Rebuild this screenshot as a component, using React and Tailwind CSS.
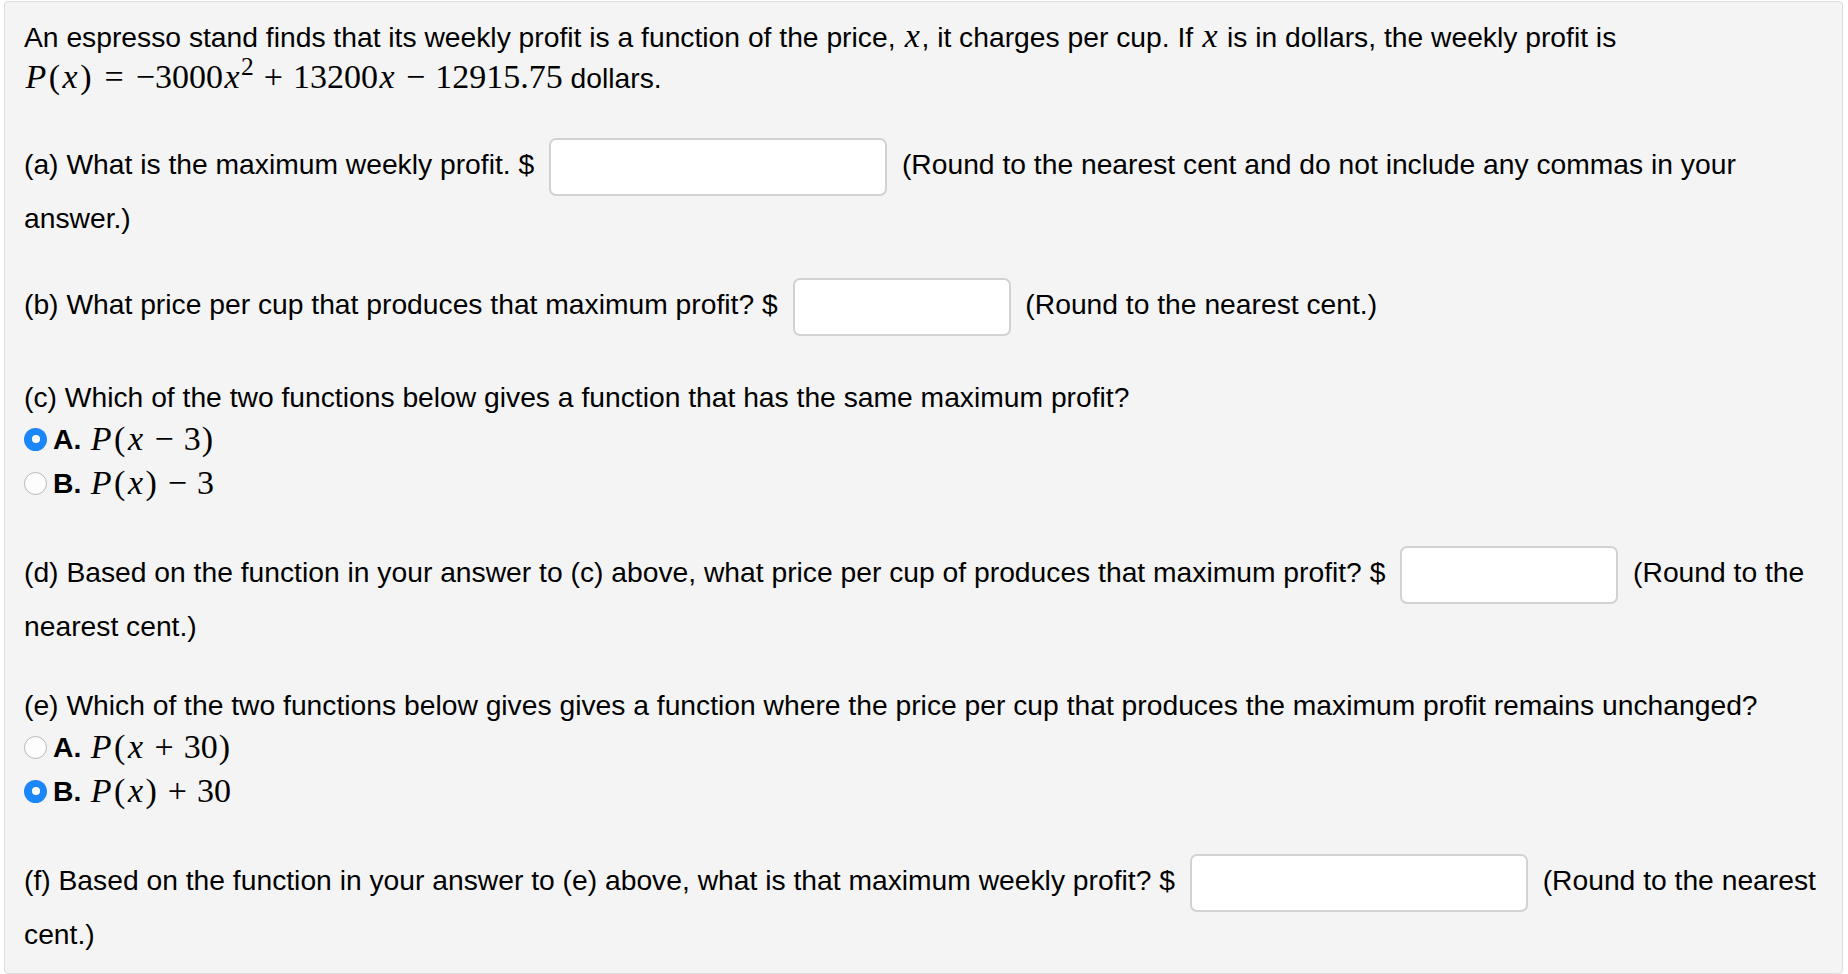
import React from 'react';

// math pieces, set in a serif face like the rendered TeX
const Math = ({ children }) => (
    <span className="font-['Liberation_Serif','DejaVu_Serif',serif] text-[34px] whitespace-nowrap">{children}</span>
);
const V = ({ children }) => <i className="italic px-[1.5px]">{children}</i>;
const Bin = ({ children }) => <span className="mx-[10px]">{children}</span>;
const Rel = ({ children }) => <span className="mx-[12px]">{children}</span>;
const Paren = ({ children }) => <span className="px-[1px]">{children}</span>;

const Answer = ({ w }) => (
    <input
        type="text"
        className={`inline-block align-middle h-[58px] my-[2px] mx-[7px] rounded-[7px] border-2 border-[#d2d2d2] bg-white ${w}`}
    />
);

const Radio = ({ checked }) =>
    checked ? (
        <span className="w-[23px] h-[23px] rounded-full bg-[#1b86f8] flex items-center justify-center shrink-0">
            <span className="w-[8px] h-[8px] rounded-full bg-white" />
        </span>
    ) : (
        <span className="w-[23px] h-[23px] rounded-full border border-[#b9b9b9] bg-[#fdfdfd] shrink-0" />
    );

const Option = ({ letter, checked, children }) => (
    <div className="flex items-center h-[44px]">
        <Radio checked={checked} />
        <span className="ml-[6px] font-bold">{letter}.</span>
        <span className="ml-[8px]">{children}</span>
    </div>
);

export default function App() {
    return (
        <div className="bg-white min-h-screen pt-[1px] pl-[4px] pr-[5px]">
            <div className="rounded-[4px] border border-[#dddddd] bg-[#f4f4f4] pl-[19px] pr-[18px] pt-[14px] pb-[19px] text-black text-[28.25px] leading-[40px] font-['Liberation_Sans',Arial,sans-serif]">
                {/* intro */}
                <div>
                    An espresso stand finds that its weekly profit is a function of the price,{' '}
                    <Math><V>x</V></Math>, it charges per cup. If <Math><V>x</V></Math> is in dollars, the weekly profit is{' '}
                    <Math>
                        <V>P</V><Paren>(</Paren><V>x</V><Paren>)</Paren><Rel>=</Rel>−3000<V>x</V><sup>2</sup>
                        <Bin>+</Bin>13200<V>x</V><Bin>−</Bin>12915.75
                    </Math>{' '}
                    dollars.
                </div>

                {/* (a) */}
                <div className="mt-[38px]">
                    (a) What is the maximum weekly profit. $ <Answer w="w-[338px]" /> (Round to the nearest cent and do not include any commas in your answer.)
                </div>

                {/* (b) */}
                <div className="mt-[38px]">
                    (b) What price per cup that produces that maximum profit? $ <Answer w="w-[218px]" /> (Round to the nearest cent.)
                </div>

                {/* (c) */}
                <div className="mt-[39px]">
                    <div>(c) Which of the two functions below gives a function that has the same maximum profit?</div>
                    <Option letter="A" checked>
                        <Math><V>P</V><Paren>(</Paren><V>x</V><Bin>−</Bin>3<Paren>)</Paren></Math>
                    </Option>
                    <Option letter="B">
                        <Math><V>P</V><Paren>(</Paren><V>x</V><Paren>)</Paren><Bin>−</Bin>3</Math>
                    </Option>
                </div>

                {/* (d) */}
                <div className="mt-[39px]">
                    (d) Based on the function in your answer to (c) above, what price per cup of produces that maximum profit? $ <Answer w="w-[218px]" /> (Round to the nearest cent.)
                </div>

                {/* (e) */}
                <div className="mt-[39px]">
                    <div>(e) Which of the two functions below gives gives a function where the price per cup that produces the maximum profit remains unchanged?</div>
                    <Option letter="A">
                        <Math><V>P</V><Paren>(</Paren><V>x</V><Bin>+</Bin>30<Paren>)</Paren></Math>
                    </Option>
                    <Option letter="B" checked>
                        <Math><V>P</V><Paren>(</Paren><V>x</V><Paren>)</Paren><Bin>+</Bin>30</Math>
                    </Option>
                </div>

                {/* (f) */}
                <div className="mt-[39px]">
                    (f) Based on the function in your answer to (e) above, what is that maximum weekly profit? $ <Answer w="w-[338px]" /> (Round to the nearest cent.)
                </div>
            </div>
        </div>
    );
}
